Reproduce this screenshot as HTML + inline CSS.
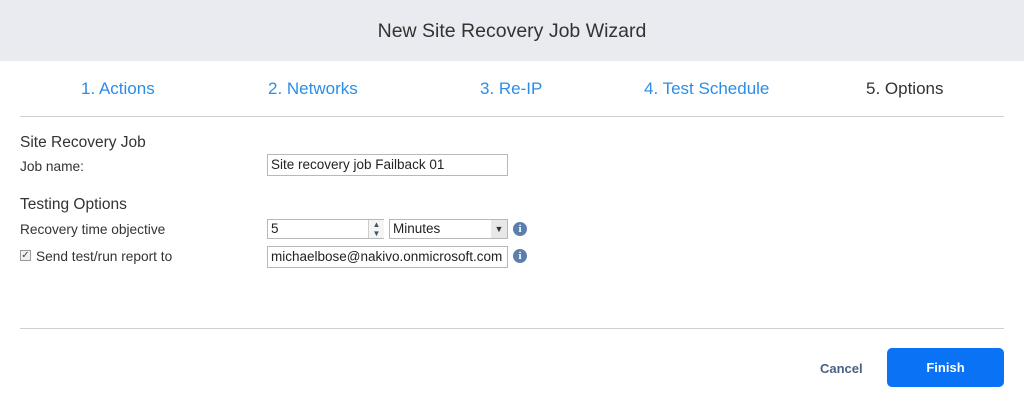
<!DOCTYPE html>
<html><head><style>
body{margin:0;width:1024px;height:407px;background:#fff;font-family:"Liberation Sans",sans-serif;position:relative;overflow:hidden}
.a{position:absolute;white-space:nowrap}
.hdr{left:0;top:0;width:1024px;height:61px;background:#e9ebf1;text-align:center;line-height:63px;font-size:19.5px;color:#333}
.step{top:79px;font-size:17px;color:#2a8ee8}
.line{left:20px;width:984px;height:1px;background:#d0d0d0}
.h{font-size:15.5px;color:#333}
.l{font-size:13.7px;color:#333}
.inp{border:1px solid #b8b8b8;height:20px;box-sizing:border-box;font-size:13.5px;line-height:18px;padding-left:3px;color:#222;background:#fff}
.info{width:14px;height:14px;border-radius:50%;background:#5a7fae;color:#fff;font-size:11px;font-weight:bold;text-align:center;line-height:14px;font-family:"Liberation Serif",serif}
</style></head><body>
<div class="a hdr">New Site Recovery Job Wizard</div>
<div class="a step" style="left:81px">1. Actions</div>
<div class="a step" style="left:268px">2. Networks</div>
<div class="a step" style="left:480px">3. Re-IP</div>
<div class="a step" style="left:644px">4. Test Schedule</div>
<div class="a step" style="left:866px;color:#333">5. Options</div>
<div class="a line" style="top:116px"></div>
<div class="a h" style="left:20px;top:134px">Site Recovery Job</div>
<div class="a l" style="left:20px;top:159px">Job name:</div>
<div class="a inp" style="left:267px;top:154px;width:241px;height:22px;line-height:20px">Site recovery job Failback 01</div>
<div class="a h" style="left:20px;top:196px">Testing Options</div>
<div class="a l" style="left:20px;top:222px">Recovery time objective</div>
<div class="a inp" style="left:267px;top:219px;width:117px">5</div>
<div class="a" style="left:368px;top:220px;width:15px;height:18px;border-left:1px solid #ccc;background:#f4f4f4;font-size:8px;color:#456;text-align:center;line-height:9px">▲<br>▼</div>
<div class="a inp" style="left:389px;top:219px;width:119px">Minutes</div>
<div class="a" style="left:491px;top:220px;width:16px;height:18px;background:#e8e8e8;font-size:9px;text-align:center;line-height:18px;color:#333">▼</div>
<div class="a info" style="left:513px;top:222px">i</div>
<div class="a" style="left:20px;top:250px;width:11px;height:11px;border:1px solid #999;background:#f0f0f0;box-sizing:border-box;font-size:10px;line-height:9px;text-align:center;color:#345">✓</div>
<div class="a l" style="left:36px;top:249px">Send test/run report to</div>
<div class="a inp" style="left:267px;top:246px;width:241px;height:22px;line-height:20px">michaelbose@nakivo.onmicrosoft.com</div>
<div class="a info" style="left:513px;top:249px">i</div>
<div class="a line" style="top:328px"></div>
<div class="a" style="left:820px;top:361px;font-size:13px;font-weight:bold;color:#4a6282">Cancel</div>
<div class="a" style="left:887px;top:348px;width:117px;height:39px;background:#0a72f5;border-radius:5px;color:#fff;font-size:13px;font-weight:bold;text-align:center;line-height:39px">Finish</div>
</body></html>
